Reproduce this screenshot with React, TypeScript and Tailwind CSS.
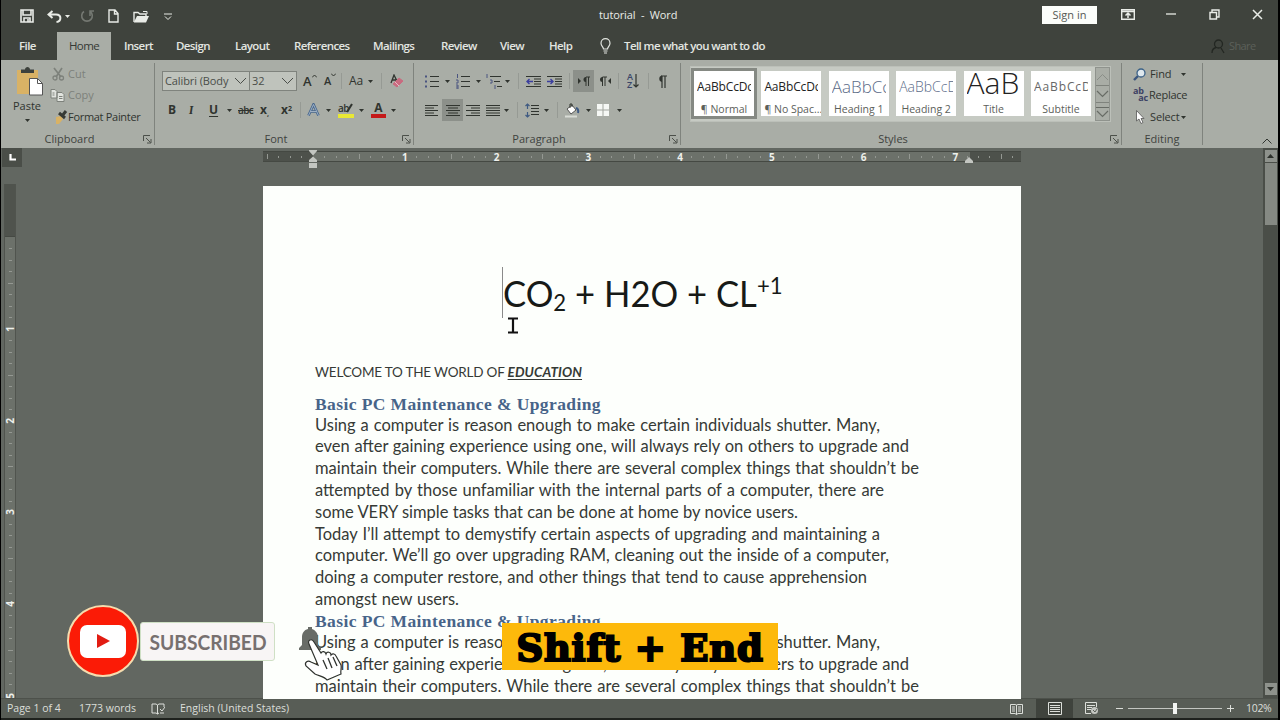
import type { ReactNode } from 'react'
import clsx from 'clsx'

const TABS = [
  { label: 'File', cls: 'w-[38px] ml-[18px]' },
  { label: 'Home', cls: 'w-[54px] bg-[#a9ada6] text-[#353934] justify-center mr-[13px] !font-medium' },
  { label: 'Insert', cls: 'w-[52px]' },
  { label: 'Design', cls: 'w-[59px]' },
  { label: 'Layout', cls: 'w-[59px]' },
  { label: 'References', cls: 'w-[79px]' },
  { label: 'Mailings', cls: 'w-[68px]' },
  { label: 'Review', cls: 'w-[59px]' },
  { label: 'View', cls: 'w-[49px]' },
  { label: 'Help', cls: 'w-[51px]' },
]

const STYLES = [
  { name: '¶ Normal', sample: 'AaBbCcDc', cls: 'text-[12px] text-[#222] tracking-[-0.150px]', active: true },
  { name: '¶ No Spac...', sample: 'AaBbCcDc', cls: 'text-[12px] text-[#222] tracking-[-0.150px]' },
  { name: 'Heading 1', sample: 'AaBbCc', cls: 'text-[17px] text-[#5c6c88] font-light' },
  { name: 'Heading 2', sample: 'AaBbCcD', cls: 'text-[14px] text-[#5c6c88] font-light' },
  { name: 'Title', sample: 'AaB', cls: 'text-[30px] text-[#222] font-light -mt-2' },
  { name: 'Subtitle', sample: 'AaBbCcD', cls: 'text-[12px] text-[#666] tracking-[0.9px]' },
]

const BODY = [
  { text: 'Using a computer is reason enough to make certain individuals shutter. Many,', w: 'w-[565px]' },
  { text: 'even after gaining experience using one, will always rely on others to upgrade and', w: 'w-[594px]' },
  { text: 'maintain their computers. While there are several complex things that shouldn’t be', w: 'w-[604px]' },
  { text: 'attempted by those unfamiliar with the internal parts of a computer, there are', w: 'w-[569px]' },
  { text: 'some VERY simple tasks that can be done at home by novice users.', w: 'w-[483px]' },
  { text: 'Today I’ll attempt to demystify certain aspects of upgrading and maintaining a', w: 'w-[565px]' },
  { text: 'computer. We’ll go over upgrading RAM, cleaning out the inside of a computer,', w: 'w-[574px]' },
  { text: 'doing a computer restore, and other things that tend to cause apprehension', w: 'w-[552px]' },
  { text: 'amongst new users.', w: 'w-[144px]' },
]

function Icon({ w, h, className, children }: { w: number; h: number; className?: string; children: ReactNode }) {
  return (
    <svg
      width={w}
      height={h}
      viewBox={`0 0 ${w} ${h}`}
      fill="none"
      stroke="currentColor"
      className={clsx('shrink-0', className)}
    >
      {children}
    </svg>
  )
}

function Caret({ className }: { className?: string }) {
  return (
    <Icon w={5} h={3} className={className}>
      <path d="M0 0h5L2.500 3z" fill="currentColor" stroke="none" />
    </Icon>
  )
}

function Sep({ className }: { className?: string }) {
  return <div className={clsx('h-4 w-px shrink-0 bg-[#969a94]', className)} />
}

function Launcher() {
  return (
    <Icon w={9} h={9} className="text-[#4c504a]">
      <path d="M.5 6V.5H7M3 3l4.500 4.500M8 4v4H4" />
    </Icon>
  )
}

function Group({ label, className, launcher, children }: { label: string; className: string; launcher?: boolean; children: ReactNode }) {
  return (
    <div className={clsx('flex h-full shrink-0 flex-col', className)}>
      <div className="flex h-[88px] flex-col border-r border-[#858983] pt-1 [border-image:linear-gradient(transparent_5%,#7f837d_5%,#7f837d_95%,transparent_95%)_1]">
        <div className="h-[67px]">{children}</div>
        <div className="flex h-4 items-center text-[11px] text-[#3f433e]">
          <span className={clsx('flex-1 text-center', launcher && 'pr-[6px]')}>{label}</span>
          <span className={clsx(launcher && '-ml-[1px] mr-[1px] w-[10px]')}>{launcher && <Launcher />}</span>
        </div>
      </div>
    </div>
  )
}

function Lines({ rows }: { rows: [number, number][] }) {
  return (
    <Icon w={14} h={13}>
      {rows.map(([x, w], i) => (
        <path key={i} d={`M${x} ${i * 2.5 + 1.5}h${w}`} />
      ))}
    </Icon>
  )
}

function TitleBar() {
  return (
    <div className="flex h-8 items-center text-[#e9ece7]">
      <div className="flex w-[598px] items-center pl-[19px]">
        <Icon w={14} h={14}>
          <path d="M1 1h12v12H1zM3 1v5h8V1M4 13V9h6v4M8 10v3" strokeWidth="1.600" />
        </Icon>
        <Icon w={15} h={13} className="ml-[13px]">
          <path d="M5.500 1L1.500 4.500l4 3.500M2 4.500h7c6 0 5.500 7 .5 7.500" strokeWidth="2" />
        </Icon>
        <Caret className="ml-[3px]" />
        <Icon w={14} h={14} className="ml-[10px] text-[#747872]">
          <path d="M4 2.500a5.300 5.300 0 1 0 6 0M10 7V2h4" strokeWidth="1.600" />
        </Icon>
        <Icon w={11} h={14} className="ml-[14px]">
          <path d="M1 1h6l3 3.500V13H1zM6.500 1v4H10" strokeWidth="1.400" />
        </Icon>
        <Icon w={16} h={13} className="ml-[14px]">
          <path d="M1 12V2.500h4L7 4h6v2" strokeWidth="1.400" />
          <path d="M1 12L4 6h12l-3 6.500H1z" fill="currentColor" stroke="none" />
          <path d="M10 1.500h4V4" />
        </Icon>
        <Icon w={8} h={7} className="ml-[15px]">
          <path d="M0 1h8M1 3.500l3 3 3-3" />
        </Icon>
      </div>
      <div className="w-[443px] whitespace-pre pb-0.5 text-[11px] font-medium tracking-[-0.120px]">tutorial  -  Word</div>
      <div className="-mt-[3px] flex h-[18px] w-[55px] items-center justify-center bg-[#fbfdfa] pt-px text-[11px] text-[#555954]">Sign in</div>
      <Icon w={14} h={11} className="-mt-1 ml-6">
        <path d="M.7.7h12.600v9.600H.7zM1 2.500h12" strokeWidth="1.400" />
        <path d="M7 9V4.500M4.500 6.500L7 4l2.500 2.500" strokeWidth="1.500" />
      </Icon>
      <Icon w={10} h={2} className="-mt-1 ml-[31px]">
        <path d="M0 1h10" strokeWidth="1.300" />
      </Icon>
      <Icon w={11} h={11} className="-mt-1 ml-[33px]">
        <path d="M1 3.500h6.500V10H1zM3 3V1h7v7H8" strokeWidth="1.400" />
      </Icon>
      <Icon w={11} h={11} className="-mt-1 ml-8">
        <path d="M1 1l9 9M10 1l-9 9" strokeWidth="1.500" />
      </Icon>
    </div>
  )
}

function TabBar() {
  return (
    <div className="flex h-7 items-center text-[11.500px] font-semibold tracking-[-0.600px] text-[#e3e6e1]">
      {TABS.map((t) => (
        <div key={t.label} className={clsx('flex h-7 shrink-0 items-center', t.cls)}>
          {t.label}
        </div>
      ))}
      <Icon w={11} h={16}>
        <path d="M3.500 11C3.500 9 1 8 1 5.200a4.500 4.500 0 0 1 9 0C10 8 7.500 9 7.500 11zM3.500 13h4M4 15h3" strokeWidth="1.200" />
      </Icon>
      <div className="ml-[13px] w-[587px]">Tell me what you want to do</div>
      <Icon w={14} h={15} className="text-[#232722]">
        <circle cx="7.500" cy="5" r="4" strokeWidth="1.300" />
        <path d="M1 14c0-3 2-5 4-5.500M10 9l3 5" strokeWidth="1.300" />
      </Icon>
      <div className="ml-1 text-[11px] font-normal text-[#5c605a]">Share</div>
    </div>
  )
}

function Clipboard() {
  return (
    <div className="flex pl-3 text-[11px]">
      <div className="flex w-[28px] flex-col items-center pt-0.5">
        <Icon w={27} h={30} className="ml-1">
          <path d="M1 4h21v24H1z" fill="#d9b265" stroke="none" />
          <path d="M5 7V3.500h4C9 0 14 0 14 3.500h4V7z" fill="#3d413c" stroke="none" />
          <path d="M13.500 12.500h8l5 5V29h-13z" fill="#fff" stroke="#555" />
          <path d="M21.500 12.500v5h5" stroke="#555" />
        </Icon>
        <span className="mt-0.5 h-4 leading-4">Paste</span>
        <Caret className="mt-[5px]" />
      </div>
      <div className="ml-[11px] flex flex-col">
        <div className="flex h-[20px] items-center text-[#7d817b]">
          <Icon w={13} h={14}>
            <path d="M2 1l7 9M10 1L4 10" strokeWidth="1.700" />
            <circle cx="3" cy="11" r="2" strokeWidth="1.300" />
            <circle cx="9.500" cy="11" r="2" strokeWidth="1.300" />
          </Icon>
          <span className="ml-[3px]">Cut</span>
        </div>
        <div className="flex h-[22px] items-center text-[#7d817b]">
          <Icon w={15} h={13} className="-ml-0.5">
            <path d="M1 .5h4l2 2V9H1zM7 3.500h5l2 2v7H7z" fill="#e1e4df" />
            <path d="M2.500 4h2M2.500 6h2M9 7.500h3.500M9 9.500h3.500" />
          </Icon>
          <span className="ml-[3px]">Copy</span>
        </div>
        <div className="flex h-[22px] items-center">
          <Icon w={12} h={14} className="ml-1">
            <path d="M0 7l5-1 2 3-4 5H0z" fill="#d9b265" stroke="none" />
            <path d="M3 3l6 5M6 6l4-5" stroke="#363a35" strokeWidth="3" />
          </Icon>
          <span className="whitespace-nowrap tracking-[-0.300px]">Format Painter</span>
        </div>
      </div>
    </div>
  )
}

function FontGroup() {
  return (
    <div className="pl-[7px] pt-[7px]">
      <div className="flex h-5 items-center">
        <div className="flex h-5 w-[88px] items-center justify-between border border-[#7f837d] bg-[#bfc3bc] pl-0.5 pr-0.5 text-[11px] text-[#4a4e49]">
          <span className="w-[65px] overflow-hidden whitespace-nowrap tracking-[-0.100px]">Calibri (Body</span>
          <Icon w={13} h={8}><path d="M1 1l5.500 5.500L12 1" /></Icon>
        </div>
        <div className="-ml-px flex h-5 w-[48px] items-center justify-between border border-[#7f837d] bg-[#bfc3bc] pl-0.5 pr-0.5 text-[11px] text-[#4a4e49]">
          32
          <Icon w={13} h={8}><path d="M1 1l5.500 5.500L12 1" /></Icon>
        </div>
        <div className="ml-[6px] flex w-[21px] text-[13px] font-semibold leading-5">
          A<Icon w={5} h={4} className="mt-[3px]"><path d="M0 3.500L2.500 1 5 3.500" /></Icon>
        </div>
        <div className="flex w-[17px] text-[11px] font-semibold leading-[22px]">
          A<Icon w={5} h={4} className="mt-[3px]"><path d="M0 .5L2.500 3 5 .5" /></Icon>
        </div>
        <Sep />
        <span className="ml-[7px] w-[19px] text-[12px] font-medium">Aa</span>
        <Caret />
        <Sep className="ml-[8px]" />
        <Icon w={14} h={14} className="ml-2">
          <path d="M1 9l3-8 3 6M2 6h4" strokeWidth="1.300" />
          <path d="M3 10l6-6 4 3-6 6z" fill="#c96b80" stroke="#c96b80" />
          <path d="M5 8l4 4" stroke="#e9b9c3" />
        </Icon>
      </div>
      <div className="mt-[9px] flex h-5 items-center text-[12px]">
        <span className="ml-[6px] w-[21px] font-bold">B</span>
        <span className="w-[20px] font-serif font-bold italic">I</span>
        <span className="w-[18px] font-bold underline underline-offset-2">U</span>
        <Caret />
        <span className="ml-[6px] w-[22px] text-[10px] font-semibold tracking-[-0.600px] line-through">abc</span>
        <span className="w-[21px] font-bold">x<sub className="text-[7px]">,</sub></span>
        <span className="w-[19px] font-bold">x<sup className="text-[7px]">2</sup></span>
        <Sep />
        <Icon w={13} h={14} className="ml-1.5">
          <path d="M1.500 12.500L6.500 1.500l5 11M3.500 8.500h6" stroke="#45658c" strokeWidth="2.600" />
          <path d="M1.500 12.500L6.500 1.500l5 11M3.500 8.500h6" stroke="#b4c3d2" strokeWidth=".8" />
        </Icon>
        <Caret className="ml-[6px]" />
        <div className="ml-[7px] w-[16px]">
          <div className="flex h-[11px] items-center text-[10px] font-semibold tracking-[-0.500px]">
            ab
            <Icon w={8} h={10} className="-ml-1"><path d="M7 1L2 9" strokeWidth="2" /></Icon>
          </div>
          <div className="h-1 bg-[#e9e834]" />
        </div>
        <Caret className="ml-[5px]" />
        <div className="ml-[7px] w-[15px] text-center text-[12px] font-bold">
          <div className="h-[11px] leading-[10px]">A</div>
          <div className="h-1 bg-[#c51a1a]" />
        </div>
        <Caret className="ml-[5px]" />
      </div>
    </div>
  )
}

function Paragraph() {
  return (
    <div className="pl-[11px] pt-[6px]">
      <div className="flex h-[22px] items-center">
        <Icon w={14} h={13}>
          <path d="M5 1.500h9M5 6.500h9M5 11.500h9" />
          <path d="M0 1.500h2M0 6.500h2M0 11.500h2" stroke="#4a5480" strokeWidth="2" />
        </Icon>
        <Caret className="ml-1.5" />
        <Icon w={14} h={15} className="ml-[6px]">
          <path d="M5 2.500h9M5 7.500h9M5 12.500h9" />
          <path d="M1.500 0v4M0 6h2v3H0M0 11h2v4H0M0 13h2" stroke="#4a5480" />
        </Icon>
        <Caret className="ml-[6px]" />
        <Icon w={16} h={15} className="ml-[5px]">
          <path d="M4 2.500h11M8 7.500h6M11 12.500h5" />
          <path d="M1 0v4M4 6h2v3H4M9 11v4" stroke="#4a5480" />
        </Icon>
        <Caret className="ml-[3px]" />
        <Sep className="ml-2" />
        <Icon w={15} h={13} className="ml-[7px]">
          <path d="M0 1.500h15M8 4h7M8 6.500h7M8 9h7M0 11.500h15" />
          <path d="M7 6.500H1M3.500 4L1 6.500 3.500 9" stroke="#3c3f9e" strokeWidth="1.400" />
        </Icon>
        <Icon w={15} h={13} className="ml-[6px]">
          <path d="M0 1.500h15M8 4h7M8 6.500h7M8 9h7M0 11.500h15" />
          <path d="M0 6.500h6M3.500 4L6 6.500 3.500 9" stroke="#3c3f9e" strokeWidth="1.400" />
        </Icon>
        <Sep className="ml-[7px]" />
        <div className="ml-[3px] flex h-[22px] w-[21px] items-center justify-center bg-[#8c908a]">
          <Icon w={12} h={10}>
            <path d="M0 2l3 3-3 3z" fill="currentColor" stroke="none" />
            <path d="M8 1v9M10.500 1v9M12 1H8" />
            <path d="M8 1a2.500 2.500 0 0 0 0 5z" fill="currentColor" stroke="none" />
          </Icon>
        </div>
        <Icon w={12} h={10} className="ml-[5px]">
          <path d="M12 2L9 5l3 3z" fill="currentColor" stroke="none" />
          <path d="M3.500 1v9M6 1v9M8 1H3.500" />
          <path d="M3.500 1a2.500 2.500 0 0 0 0 5z" fill="currentColor" stroke="none" />
        </Icon>
        <Sep className="ml-[7px]" />
        <div className="ml-[8px] flex w-[13px] items-center">
          <div className="flex flex-col text-[9px] font-semibold leading-[8px] text-[#3a4668]">
            <span>A</span>
            <span>Z</span>
          </div>
          <Icon w={6} h={14}><path d="M3 0v13M.5 10.500L3 13l2.500-2.500" strokeWidth="1.200" /></Icon>
        </div>
        <Sep className="ml-2" />
        <Icon w={10} h={13} className="ml-[8px]">
          <path d="M5 1v12M8 1v12M10 1H4" strokeWidth="1.200" />
          <path d="M5 .5a3.300 3.300 0 0 0 0 6.500z" fill="currentColor" stroke="none" />
        </Icon>
      </div>
      <div className="mt-[7px] flex h-[22px] items-center">
        <Lines rows={[[0, 13], [0, 9], [0, 13], [0, 9], [0, 13]]} />
        <div className="ml-[3px] flex h-[22px] w-[21px] items-center justify-center bg-[#8c908a]">
          <Lines rows={[[0, 14], [2, 10], [0, 14], [2, 10], [0, 14]]} />
        </div>
        <div className="ml-[3px] flex"><Lines rows={[[0, 14], [5, 9], [0, 14], [5, 9], [0, 14]]} /></div>
        <div className="ml-[6px] flex"><Lines rows={[[0, 14], [0, 14], [0, 14], [0, 14], [0, 14]]} /></div>
        <Caret className="ml-[4px]" />
        <Sep className="ml-2" />
        <Icon w={14} h={15} className="ml-[7px]">
          <path d="M6 2.500h8M6 5.500h8M6 8.500h8M6 11.500h8" />
          <path d="M2.500 1v5M.5 3l2-2 2 2M2.500 9v5M.5 12l2 2 2-2" stroke="#3f5a82" strokeWidth="1.200" />
        </Icon>
        <Caret className="ml-[5px]" />
        <Sep className="ml-2" />
        <Icon w={15} h={15} className="ml-[7px]">
          <path d="M2 6l5-4 4 5-5 4z" fill="#fff" stroke="#555" />
          <path d="M5 5V1h2v3" />
          <path d="M11 5q3 1 2 5" stroke="#3f5a82" strokeWidth="2" />
          <path d="M0 13.500h12" stroke="#d9dcd6" strokeWidth="2" />
        </Icon>
        <Caret className="ml-[6px]" />
        <Icon w={12} h={12} className="ml-[6px]">
          <path d="M0 0h12v12H0z" fill="#f6f8f5" stroke="none" />
          <path d="M6 0v12M0 6h12" stroke="#a2a69f" />
        </Icon>
        <Caret className="ml-[8px]" />
      </div>
    </div>
  )
}

function StylesGallery() {
  return (
    <div className="ml-[9px] mt-0.5 flex h-[56px] w-[421px] border border-[#bcc0b9] bg-[#c6cac3]">
      <div className="flex w-[405px] gap-[1.400px]">
        {STYLES.map((s) => (
          <div
            key={s.name}
            className={clsx(
              'mt-px h-[51px] w-[66px] shrink-0 border-[3px]',
              s.active ? 'border-[#858983]' : 'border-transparent',
            )}
          >
            <div className="flex h-[45px] flex-col overflow-hidden bg-white px-[3px]">
              <div className="flex h-[31px] items-center overflow-hidden whitespace-nowrap">
                <span className={s.cls}>{s.sample}</span>
              </div>
              <div className="whitespace-nowrap text-center text-[10.500px] leading-[14px] text-[#5c605a]">{s.name}</div>
            </div>
          </div>
        ))}
      </div>
      <div className="flex w-[15px] flex-col divide-y divide-[#7f837d] border border-[#8f938d] bg-[#a9ada6] text-[#686c66]">
        <div className="flex h-[18px] items-center justify-center text-[#8a8e88]">
          <Icon w={13} h={8}><path d="M1 7l5.500-5.500L12 7" /></Icon>
        </div>
        <div className="flex h-[17px] items-center justify-center">
          <Icon w={13} h={8}><path d="M1 1l5.500 5.500L12 1" strokeWidth="1.200" /></Icon>
        </div>
        <div className="flex flex-1 items-center justify-center">
          <Icon w={13} h={12}><path d="M0 1.500h13M1 5l5.500 5.500L12 5" strokeWidth="1.200" /></Icon>
        </div>
      </div>
    </div>
  )
}

function Editing() {
  return (
    <div className="flex flex-col pl-[11px] text-[11px] tracking-[-0.150px]">
      <div className="flex h-[20px] items-center">
        <Icon w={13} h={13}>
          <path d="M1 12l4-4" stroke="#3b557d" strokeWidth="2.400" />
          <circle cx="8" cy="5" r="4" stroke="#3b6187" strokeWidth="1.300" fill="#dfe8ee" />
        </Icon>
        <span className="ml-[4px] w-[31px]">Find</span>
        <Caret />
      </div>
      <div className="flex h-[22px] items-center">
        <div className="flex w-[15px] flex-col text-[9px] font-bold leading-[7px] text-[#3d4264]">
          <span className="-mt-0.5">ab</span>
          <span className="self-end">ac</span>
        </div>
        <span className="ml-px tracking-[-0.250px]">Replace</span>
      </div>
      <div className="flex h-[22px] items-center">
        <Icon w={9} h={14} className="ml-[3px]">
          <path d="M.5.5v10.500l2.500-2 2 4.500 2-1-2-4h3z" fill="#fff" stroke="#555" strokeWidth=".8" />
        </Icon>
        <span className="ml-[5px] w-[31px]">Select</span>
        <Caret />
      </div>
    </div>
  )
}

function Tick({ k, vertical }: { k: number; vertical?: boolean }) {
  const inch = k > 0 && k % 8 === 0
  return (
    <div className={clsx('flex shrink-0', vertical ? 'h-[11.470px] w-full justify-center' : 'h-full w-[11.470px] items-center')}>
      {inch ? (
        <span
          className={clsx(
            'flex h-2.5 w-2.5 shrink-0 items-center justify-center text-[10px] font-bold leading-none text-[#eef0ec]',
            vertical ? '-mt-[5px] -rotate-90' : '-ml-[5px]',
          )}
        >
          {k / 8}
        </span>
      ) : (
        <span
          className={clsx(
            'bg-[#949892]',
            vertical ? 'h-px' : 'w-px',
            k === 0 && 'opacity-0',
            k % 4 === 0 ? (vertical ? 'w-[5px]' : 'h-[5px]') : vertical ? 'w-[3px]' : 'h-[2px]',
          )}
        />
      )}
    </div>
  )
}

const range = (from: number, to: number) => Array.from({ length: to - from }, (_, i) => from + i)

function HorizontalRuler() {
  return (
    <div className="relative ml-[240px] flex h-[11px] w-[758px] border-y border-[#454943]">
      <div className="flex w-[50px] bg-[#4d514b] pl-1">
        {range(-4, 0).map((k) => <Tick key={k} k={k} />)}
      </div>
      <div className="flex w-[657px] overflow-hidden bg-[#6c716a]">
        {range(0, 58).map((k) => <Tick key={k} k={k} />)}
      </div>
      <div className="flex w-[51px] overflow-hidden bg-[#4d514b] pl-[8px]">
        {range(58, 62).map((k) => <Tick key={k} k={k === 60 ? 60 : 59} />)}
      </div>
      {/* indent markers */}
      <Icon w={8} h={20} className="absolute -top-[3px] left-[46px] text-[#c3c6c1]">
        <path d="M0 1h8v1L4 6.500 0 2zM4 7.500L8 11v2H0v-2zM0 14h8v5H0z" fill="currentColor" stroke="none" />
      </Icon>
      <Icon w={8} h={6} className="absolute left-[702px] top-[5px] text-[#c3c6c1]">
        <path d="M4 0l4 4v2H0V4z" fill="currentColor" stroke="none" />
      </Icon>
    </div>
  )
}

function BodyLines({ from, to }: { from: number; to: number }) {
  return (
    <>
      {BODY.slice(from, to).map((l) => (
        <p key={l.text} className={clsx('h-[21.800px] whitespace-nowrap [text-align-last:justify]', l.w)}>
          {l.text}
        </p>
      ))}
    </>
  )
}

const H = 'whitespace-nowrap font-["Liberation_Serif"] text-[17.500px] font-bold tracking-[0.400px] text-[#476489]'

function Page() {
  return (
    <div className="ml-[240px] mt-[24px] h-[513px] w-[758px] overflow-hidden bg-[#fdfffc] pl-[52px] font-[Lato,sans-serif] text-[16.500px] leading-[21.800px] text-[#363a36]">
      <div className="ml-[187px] mt-[81px] flex h-[51px] w-[300px]">
        <div className="h-[51px] w-px shrink-0 bg-[#8a8a8a]" />
        <p className="origin-left scale-x-[0.923] whitespace-nowrap text-[37.500px] leading-[52px] text-[#171a17]">
          CO<sub className="bottom-[-0.180em] text-[24px]">2</sub> + H2O + CL<sup className="top-[-0.540em] text-[24px]">+1</sup>
        </p>
      </div>
      <p className="mt-[44px] h-[22px] w-[266px] whitespace-nowrap text-[13.500px] tracking-[-0.200px] [text-align-last:justify]">
        WELCOME TO THE WORLD OF <b className="italic tracking-[0.100px] underline underline-offset-2">EDUCATION</b>
      </p>
      <h2 className={clsx(H, 'mt-[10px] h-[20.700px]')}>Basic PC Maintenance &amp; Upgrading</h2>
      <BodyLines from={0} to={9} />
      <h2 className={clsx(H, 'h-[21.500px] leading-[21px]')}>Basic PC Maintenance &amp; Upgrading</h2>
      <BodyLines from={0} to={3} />
    </div>
  )
}

function Scrollbar() {
  return (
    <div className="flex h-[550px] w-[15px] flex-col items-center bg-[#4a4e48] pt-0.5">
      <div className="flex h-[12px] w-[12px] items-center justify-center bg-[#8e928c] text-[#2c302b]">
        <Icon w={7} h={4}><path d="M0 4h7L3.500 0z" fill="currentColor" stroke="none" /></Icon>
      </div>
      <div className="mt-px h-[62px] w-[12px] bg-[#858983]" />
      <div className="mb-[3px] mt-auto flex h-[12px] w-[12px] items-center justify-center bg-[#8e928c] text-[#2c302b]">
        <Icon w={7} h={4}><path d="M0 0h7L3.500 4z" fill="currentColor" stroke="none" /></Icon>
      </div>
    </div>
  )
}

function StatusBar() {
  return (
    <div className="flex h-[20px] items-center border-t border-[#4d514b] bg-[#585d56] text-[10.500px] font-medium text-[#dcdfda]">
      <span className="ml-[6px] w-[72px]">Page 1 of 4</span>
      <span className="w-[72px]">1773 words</span>
      <Icon w={14} h={12}>
        <path d="M6.500 2v9L5 10H1V1h4l1.500 1L8 1h5v3M6.500 11L8 10" />
        <path d="M9 6l2 2 3-4M9 10h4" />
      </Icon>
      <span className="ml-[15px] w-[830px]">English (United States)</span>
      <Icon w={13} h={12}>
        <path d="M6.500 2v9.500L5 10.500H.5v-9H5zM6.500 2L8 1.500h4.500v9H8l-1.500 1M2 4h3M2 6h3M2 8h3M8 4h3M8 6h3M8 8h3" />
      </Icon>
      <div className="ml-[13px] flex h-[19px] w-[37px] items-center justify-center bg-[#3f433d]">
        <Icon w={14} h={13}>
          <path d="M.5.5h13v12H.5zM2 3.500h10M2 5.500h10M2 7.500h10M2 9.500h10" />
        </Icon>
      </div>
      <Icon w={14} h={13} className="ml-3">
        <path d="M6 11.500H.5V.5h11V5M2 3.500h8M2 5.500h5M2 7.500h4" />
        <circle cx="9.500" cy="8.500" r="3.500" fill="#c3c6c1" stroke="none" />
        <path d="M8 8l2 2 2-3" stroke="#585d56" />
      </Icon>
      <Icon w={7} h={7} className="ml-[17px]"><path d="M0 3.500h7" /></Icon>
      <div className="ml-[5px] flex w-[94px] items-center">
        <div className="h-px w-[45px] bg-[#c3c6c1]" />
        <div className="h-[11px] w-[4px] bg-[#f3f5f2]" />
        <div className="h-px w-[45px] bg-[#c3c6c1]" />
      </div>
      <Icon w={7} h={7} className="ml-[5px]"><path d="M0 3.500h7M3.500 0v7" /></Icon>
      <span className="ml-[12px] tracking-[-0.300px]">102%</span>
    </div>
  )
}

function Overlays() {
  return (
    <>
      <div className="absolute left-[66px] top-[605px] flex h-[72px] w-[72px] items-center justify-center rounded-full border-2 border-[#f5dcae] bg-[#fb1b06]">
        <div className="flex h-[33px] w-[46px] items-center justify-center rounded-[7px] bg-white">
          <Icon w={13} h={14}><path d="M0 0l13 7-13 7z" fill="#e21c12" stroke="none" /></Icon>
        </div>
      </div>
      <div className="absolute left-[139px] top-[622px] flex h-[39px] w-[135px] items-center justify-center rounded-[3px] border border-[#cfe0c5] bg-[#f8f5f5] font-[Lato,sans-serif] text-[21px] font-bold text-[#77706f]">
        <span className="scale-x-[0.915]">SUBSCRIBED</span>
      </div>
      <Icon w={50} h={56} className="absolute left-[297px] top-[625px]">
        <path d="M1 25h22v-2l-3-3v-8c0-4-3-7-6-8V2h-4v2c-4 1-6 4-6 8v8l-3 3z" fill="#686c67" stroke="none" />
        <path
          d="M11 19c-2-4 3-6 5-2l7 11c1-2 4-2 5 1 1-3 5-2 5 1 2-2 4-1 5 1l5 9c1 4-1 6 0 9l-14 6c-3-4-8-4-12-6l-9-8c-2-4 2-6 5-4l7 3z"
          fill="#fff"
          stroke="#30332f"
          strokeWidth="1.200"
        />
        <path d="M25 35l4 9M30 33l4 10M35 32l4 9" stroke="#30332f" strokeWidth="1.300" />
      </Icon>
      <div className="absolute left-[501px] top-[623px] flex h-[47px] w-[276px] items-center justify-center whitespace-nowrap bg-[#fdb90b] pt-[4px] font-['DejaVu_Serif'] text-[37px] font-bold tracking-[0.800px] text-black [-webkit-text-stroke:2.200px_black]">
        Shift + End
      </div>
      {/* text cursor */}
      <Icon w={10} h={17} className="absolute left-[507px] top-[317px] text-[#111]">
        <path d="M0 1.500h10M0 15.500h10M5 1v15" strokeWidth="2.200" />
      </Icon>
    </>
  )
}

export default function App() {
  return (
    <div className="relative h-[720px] w-[1280px] overflow-hidden border-l border-r-2 border-black bg-[#3f433d] font-['Open_Sans',sans-serif] text-[#30342f]">
      <TitleBar />
      <TabBar />
      <div className="flex h-[88px] bg-[#a9ada6]">
        <Group label="Clipboard" className="w-[154px]" launcher><Clipboard /></Group>
        <Group label="Font" className="w-[259px]" launcher><FontGroup /></Group>
        <Group label="Paragraph" className="w-[267px]" launcher><Paragraph /></Group>
        <Group label="Styles" className="w-[441px]" launcher><StylesGallery /></Group>
        <Group label="Editing" className="w-[81px]"><Editing /></Group>
        <div className="flex flex-1 items-end justify-end pb-1 pr-1.5">
          <Icon w={10} h={6}><path d="M.5 5.500L5 1l4.500 4.500" /></Icon>
        </div>
      </div>
      <div className="flex h-[550px] bg-[#626761]">
        <div className="flex w-[22px] flex-col pl-px">
          <div className="flex h-[19px] w-5 items-center justify-center bg-[#4a4e48]">
            <Icon w={7} h={7} className="text-white"><path d="M1.500 0v5.500H7" strokeWidth="2.200" /></Icon>
          </div>
          <div className="ml-[2px] mt-[17px] flex w-[12px] flex-1 flex-col overflow-hidden border-x border-[#50544e]">
            <div className="h-[53px] shrink-0 border-b border-[#454943] bg-[#4f534d]" />
            <div className="flex-1 overflow-hidden bg-[#6c716a]">
              {range(0, 42).map((k) => <Tick key={k} k={k} vertical />)}
            </div>
          </div>
        </div>
        <div className="w-[1240px] pt-[3px]">
          <HorizontalRuler />
          <Page />
        </div>
        <Scrollbar />
      </div>
      <StatusBar />
      <div className="h-0.5 bg-[#1f221e]" />
      <Overlays />
    </div>
  )
}
